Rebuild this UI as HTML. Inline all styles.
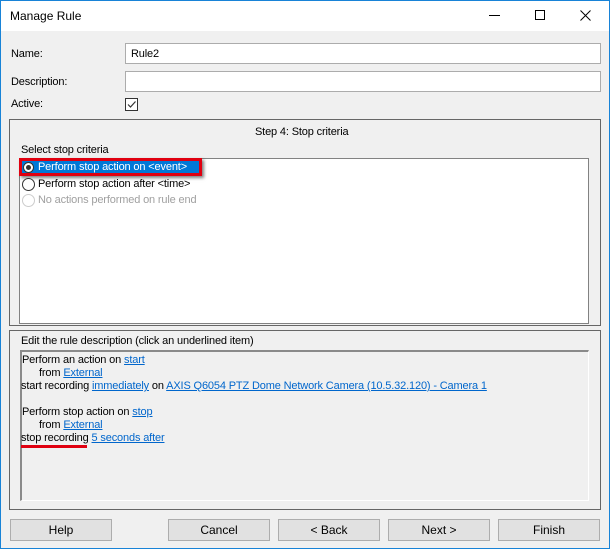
<!DOCTYPE html>
<html><head><style>
*{margin:0;padding:0;box-sizing:border-box}
body{width:610px;height:549px;position:relative;background:#f0f0f0;font-family:"Liberation Sans",sans-serif;font-size:11px;letter-spacing:-0.15px;color:#000;overflow:hidden}
.a{position:absolute}
.win{left:0;top:0;width:610px;height:549px;border:1px solid #1883d7}
.title{left:1px;top:1px;width:608px;height:30px;background:#fff}
.inp{background:#fff;border:1px solid #acacac}
.btn{background:#e1e1e1;border:1px solid #adadad;text-align:center;line-height:20px;height:22px;width:102px;top:519px;font-size:12px;letter-spacing:0}
.l{color:#0066cc;text-decoration:underline}
.t{white-space:nowrap}
</style></head><body>
<div class="a win"></div>
<div class="a title"></div>
<div class="a t" style="left:10px;top:9px;font-size:12px;letter-spacing:0">Manage Rule</div>
<div class="a" style="left:489px;top:15px;width:11px;height:1px;background:#000"></div>
<div class="a" style="left:535px;top:10px;width:10px;height:10px;border:1px solid #000"></div>
<svg class="a" style="left:580px;top:10px" width="11" height="11"><path d="M0.5 0.5L10.5 10.5M10.5 0.5L0.5 10.5" stroke="#000" stroke-width="1"/></svg>

<div class="a t" style="left:11px;top:48px">Name:</div>
<div class="a inp" style="left:125px;top:43px;width:476px;height:21px"></div>
<div class="a t" style="left:131px;top:48px">Rule2</div>
<div class="a t" style="left:11px;top:76px">Description:</div>
<div class="a inp" style="left:125px;top:71px;width:476px;height:21px"></div>
<div class="a t" style="left:11px;top:98px">Active:</div>
<div class="a" style="left:125px;top:98px;width:13px;height:13px;border:1px solid #333;background:#fff"></div>
<svg class="a" style="left:126px;top:99px" width="11" height="11"><path d="M2 5.5L4.5 8L9.5 2.5" stroke="#333" stroke-width="1.2" fill="none"/></svg>

<div class="a" style="left:9px;top:119px;width:592px;height:207px;border:1px solid #666"></div>
<div class="a t" style="left:255px;top:126px">Step 4: Stop criteria</div>
<div class="a t" style="left:21px;top:144px">Select stop criteria</div>
<div class="a" style="left:19px;top:158px;width:570px;height:166px;background:#fff;border:1px solid #828282"></div>
<div class="a" style="left:19px;top:158px;width:183px;height:18px;border:3px solid #e00010;box-shadow:2px 2px 3px rgba(0,0,0,.5)"></div>
<div class="a" style="left:22px;top:161px;width:177px;height:12px;background:#0078d7"></div>
<div class="a" style="left:23px;top:162px;width:11px;height:11px;border-radius:50%;background:#fff;border:1px solid #333"></div>
<div class="a" style="left:26px;top:165px;width:5px;height:5px;border-radius:50%;background:#333"></div>
<div class="a t" style="left:38px;top:161px;color:#fff">Perform stop action on &lt;event&gt;</div>
<div class="a" style="left:22px;top:178px;width:13px;height:13px;border-radius:50%;background:#fff;border:1px solid #333"></div>
<div class="a t" style="left:38px;top:178px">Perform stop action after &lt;time&gt;</div>
<div class="a" style="left:22px;top:194px;width:13px;height:13px;border-radius:50%;background:#fff;border:1px solid #ccc"></div>
<div class="a t" style="left:38px;top:194px;color:#a0a0a0">No actions performed on rule end</div>

<div class="a" style="left:9px;top:330px;width:592px;height:180px;border:1px solid #666"></div>
<div class="a t" style="left:21px;top:335px">Edit the rule description (click an underlined item)</div>
<div class="a" style="left:20px;top:350px;width:569px;height:151px;border-top:2px solid #8a8a8a;border-left:2px solid #8a8a8a;border-right:1px solid #fff;border-bottom:1px solid #fff;background:#f0f0f0"></div>
<div class="a t" style="left:22px;top:354px">Perform an action on <span class="l">start</span></div>
<div class="a t" style="left:39px;top:367px">from <span class="l">External</span></div>
<div class="a t" style="left:21px;top:380px">start recording <span class="l">immediately</span> on <span class="l">AXIS Q6054 PTZ Dome Network Camera (10.5.32.120) - Camera 1</span></div>
<div class="a t" style="left:22px;top:406px">Perform stop action on <span class="l">stop</span></div>
<div class="a t" style="left:39px;top:419px">from <span class="l">External</span></div>
<div class="a t" style="left:21px;top:432px">stop recording <span class="l">5 seconds after</span></div>
<div class="a" style="left:21px;top:445px;width:66px;height:3px;background:#e00010"></div>

<div class="a btn" style="left:10px">Help</div>
<div class="a btn" style="left:168px">Cancel</div>
<div class="a btn" style="left:278px">&lt; Back</div>
<div class="a btn" style="left:388px">Next &gt;</div>
<div class="a btn" style="left:498px">Finish</div>
</body></html>
